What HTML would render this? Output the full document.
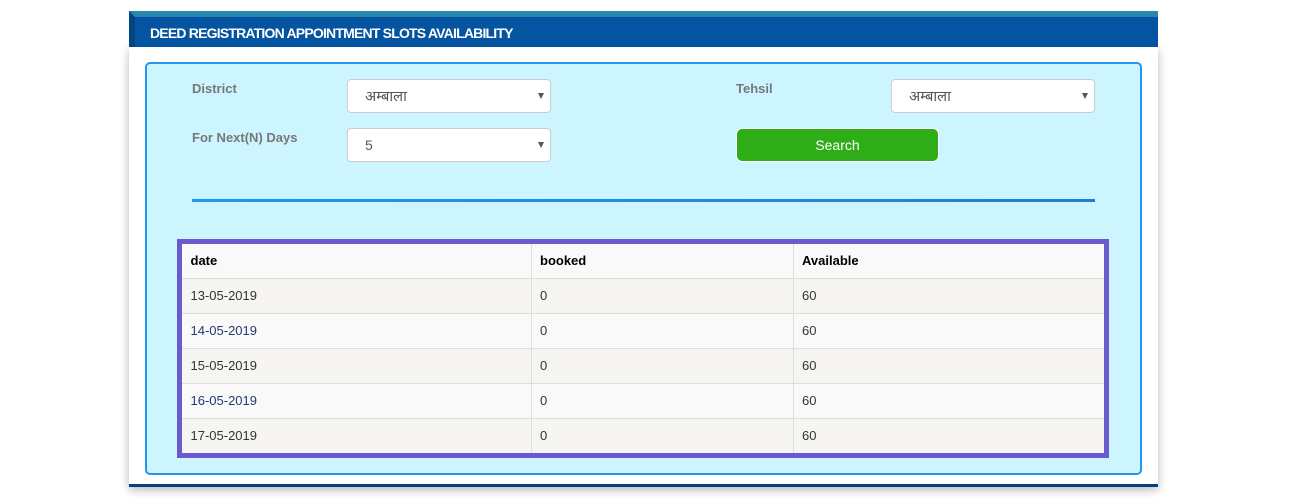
<!DOCTYPE html>
<html><head><meta charset="utf-8"><style>
html,body{margin:0;padding:0;width:1311px;height:497px;overflow:hidden;background:#fff;font-family:"Liberation Sans",Arial,sans-serif}
.a{position:absolute;box-sizing:border-box}
.lbl{font-size:13px;font-weight:bold;color:#777;line-height:18px;white-space:nowrap}
.sel{width:204px;height:34px;background:#fff;border:1px solid #ccc;border-radius:4px;font-size:14px;color:#555;line-height:32px;padding-left:17px}
.sel:after{content:"";position:absolute;right:6px;top:13px;border-left:3px solid transparent;border-right:3px solid transparent;border-top:6px solid #555}
.dv{font-size:14.7px;line-height:34px;font-family:'Liberation Sans','Noto Sans Devanagari','Lohit Devanagari','FreeSans',sans-serif}
.r{left:182px;width:922px;height:35px;border-bottom:1px solid #ddd;font-size:13px;color:#333}
.c{position:absolute;top:0;line-height:34px;white-space:nowrap}
.c1{left:8.5px}.c2{left:358px}.c3{left:620px}
.v{position:absolute;top:244px;width:1px;height:209px;background:#ddd}
</style></head><body>
<div class="a" style="left:129px;top:47px;width:1029px;height:440px;background:#fff;box-shadow:0 3px 9px rgba(0,0,0,.28);border-bottom:3px solid #03417f"></div>
<div class="a" style="left:129px;top:11px;width:1029px;height:6px;background:#2a86b0"></div>
<div class="a" style="left:129px;top:17px;width:1029px;height:30px;background:#0454a2"></div>
<svg class="a" style="left:129px;top:11px" width="7" height="36"><polygon points="0,0 6,6 6,36 0,36" fill="#04447f"/></svg>
<div class="a" style="left:150px;top:24px;font-size:14px;font-weight:bold;color:#fff;line-height:18px;letter-spacing:-.8px;white-space:nowrap">DEED REGISTRATION APPOINTMENT SLOTS AVAILABILITY</div>
<div class="a" style="left:145px;top:62px;width:997px;height:413px;background:#ccf5ff;border:2px solid #2196f3;border-radius:5px"></div>
<div class="a lbl" style="left:192px;top:80px">District</div>
<div class="a lbl" style="left:736px;top:80px">Tehsil</div>
<div class="a lbl" style="left:192px;top:129px">For Next(N) Days</div>
<div class="a sel dv" style="left:347px;top:79px">अम्बाला</div>
<div class="a sel dv" style="left:891px;top:79px">अम्बाला</div>
<div class="a sel" style="left:347px;top:128px">5</div>
<div class="a" style="left:736px;top:128px;width:203px;height:34px;background:#2fad18;border:1px solid #fff;border-radius:6px;color:#fff;font-size:14px;line-height:32px;text-align:center">Search</div>
<div class="a" style="left:192px;top:199px;width:903px;height:3px;background:linear-gradient(90deg,#2196f3,#1e80d0)"></div>
<div class="a" style="left:177px;top:239px;width:932px;height:219px;border:5px solid #6a5acd;background:#f9f9f9"></div>
<div class="a r" style="top:244px;background:#f9f9f9;color:#000;font-weight:bold"><span class="c c1">date</span><span class="c c2">booked</span><span class="c c3">Available</span></div>
<div class="a r" style="top:279px;background:#f6f5f2"><span class="c c1">13-05-2019</span><span class="c c2">0</span><span class="c c3">60</span></div>
<div class="a r" style="top:314px;background:#f9f9f9"><span class="c c1" style="color:#23396f">14-05-2019</span><span class="c c2">0</span><span class="c c3">60</span></div>
<div class="a r" style="top:349px;background:#f6f5f2"><span class="c c1">15-05-2019</span><span class="c c2">0</span><span class="c c3">60</span></div>
<div class="a r" style="top:384px;background:#f9f9f9"><span class="c c1" style="color:#23396f">16-05-2019</span><span class="c c2">0</span><span class="c c3">60</span></div>
<div class="a r" style="top:419px;height:34px;border-bottom:0;background:#f6f5f2"><span class="c c1">17-05-2019</span><span class="c c2">0</span><span class="c c3">60</span></div>
<div class="v" style="left:531px"></div>
<div class="v" style="left:793px"></div>
</body></html>
